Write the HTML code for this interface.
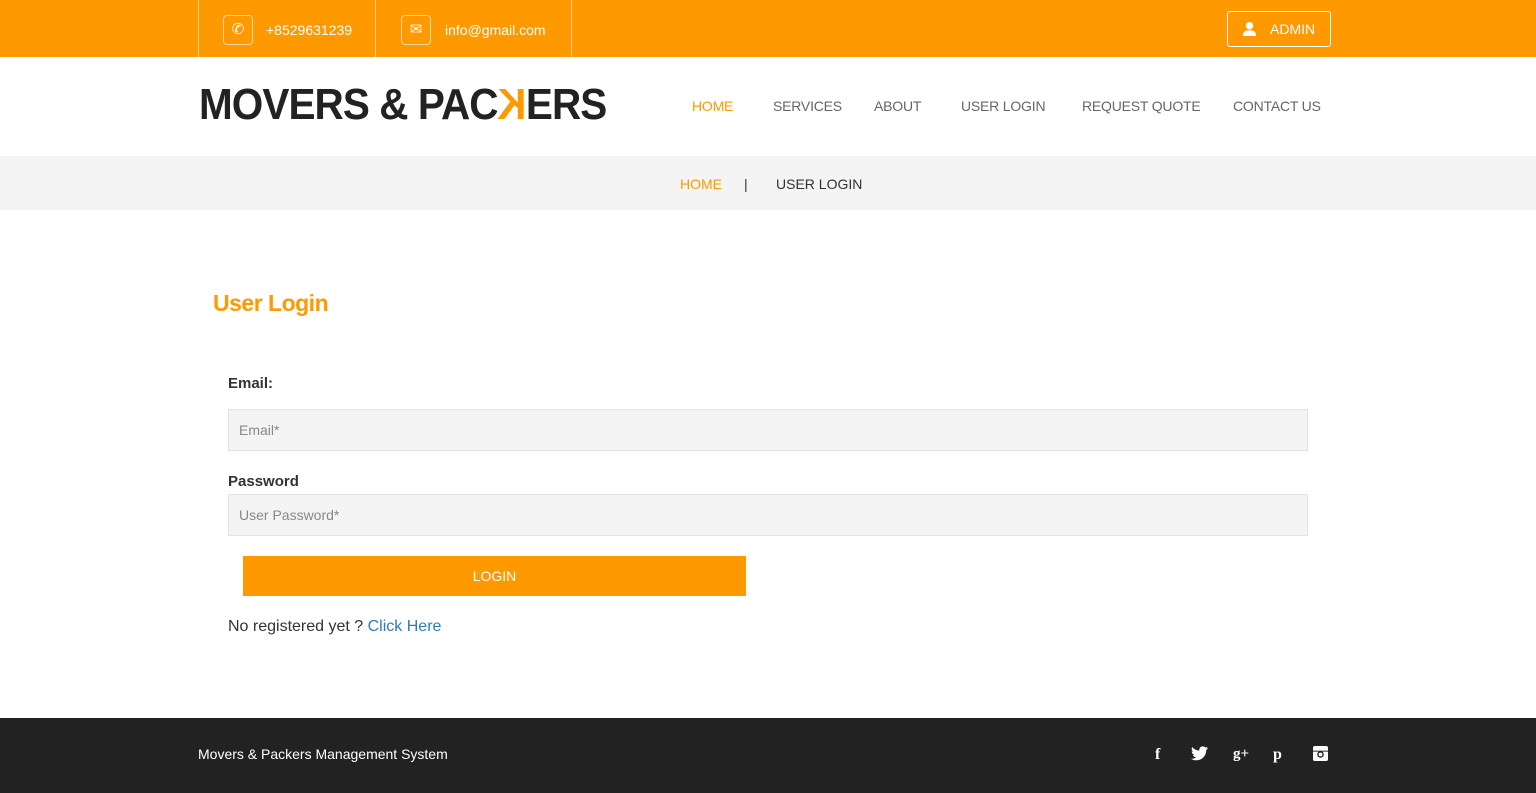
<!DOCTYPE html>
<html><head><meta charset="utf-8"><style>
*{margin:0;padding:0;box-sizing:border-box}
body{width:1536px;height:793px;font-family:"Liberation Sans",sans-serif;background:#fff;position:relative;overflow:hidden}
.top{position:absolute;left:0;top:0;width:1536px;height:57px;background:#ff9900}
.vl{position:absolute;top:0;width:1px;height:57px;background:#ffd089}
.ib{position:absolute;top:15px;width:30px;height:30px;border:1px solid #ffd9a0;border-radius:4px;color:#fff;text-align:center;line-height:28px;font-size:15px}
.tt{position:absolute;top:22px;color:#fff;font-size:14px}
.admin{position:absolute;left:1227px;top:11px;width:104px;height:36px;border:1px solid #fff;border-radius:3px;color:#fff;font-size:14px;line-height:34px;padding-left:42px}
.logo{position:absolute;left:199px;top:80px;font-size:44px;font-weight:bold;color:#222;letter-spacing:-1px;transform:scaleX(0.92);transform-origin:left}
.logo span{color:#ff9900;display:inline-block;transform:scaleX(-1)}
.nav{position:absolute;top:98px;font-size:14px;color:#666;letter-spacing:-0.2px}
.bc{position:absolute;left:0;top:156px;width:1536px;height:54px;background:#f4f4f4;font-size:14px}
h2{position:absolute;left:213px;top:290px;color:#ff9900;font-size:23px;font-weight:bold;letter-spacing:-0.5px}
.lbl{position:absolute;left:228px;font-size:15px;font-weight:bold;color:#333}
.inp{position:absolute;left:228px;width:1080px;height:42px;background:#f4f4f4;border:1px solid #e4e4e4;padding-left:10px;line-height:40px;font-size:14px;color:#888}
.btn{position:absolute;left:243px;top:556px;width:503px;height:40px;background:#ff9900;color:#fff;font-size:14px;text-align:center;line-height:40px}
.foot{position:absolute;left:0;top:718px;width:1536px;height:75px;background:#222}
.s{position:absolute;top:28px;color:#fff;font-size:16px;font-weight:bold}
</style></head><body>
<div class="top">
<div class="vl" style="left:198px"></div><div class="vl" style="left:375px"></div><div class="vl" style="left:571px"></div>
<div class="ib" style="left:223px">✆</div><div class="tt" style="left:266px">+8529631239</div>
<div class="ib" style="left:401px">✉</div><div class="tt" style="left:445px">info@gmail.com</div>
<div class="admin"><svg style="position:absolute;left:14px;top:9px" width="15" height="15" viewBox="0 0 16 16"><circle cx="8" cy="5" r="4" fill="#fff"/><path d="M1 16c0-5 3-6 7-6s7 1 7 6z" fill="#fff"/></svg>ADMIN</div>
</div>
<div class="logo">MOVERS &amp; PAC<span>K</span>ERS</div>
<div class="nav" style="left:692px;color:#ff9900">HOME</div>
<div class="nav" style="left:773px">SERVICES</div>
<div class="nav" style="left:874px">ABOUT</div>
<div class="nav" style="left:961px">USER LOGIN</div>
<div class="nav" style="left:1082px">REQUEST QUOTE</div>
<div class="nav" style="left:1233px">CONTACT US</div>
<div class="bc"><span style="position:absolute;left:680px;top:20px;color:#ff9900">HOME</span><span style="position:absolute;left:744px;top:20px;color:#333">|</span><span style="position:absolute;left:776px;top:20px;color:#333">USER LOGIN</span></div>
<h2>User Login</h2>
<div class="lbl" style="top:375px">Email:</div>
<div class="inp" style="top:409px">Email*</div>
<div class="lbl" style="top:473px">Password</div>
<div class="inp" style="top:494px">User Password*</div>
<div class="btn">LOGIN</div>
<div style="position:absolute;left:228px;top:618px;font-size:16px;color:#333">No registered yet ? <span style="color:#337ab7">Click Here</span></div>
<div class="foot">
<div style="position:absolute;left:198px;top:28px;color:#fff;font-size:14px">Movers &amp; Packers Management System</div>
<div class="s" style="left:1155px;font-family:'Liberation Serif',serif">f</div>
<div class="s" style="left:1191px"><svg width="17" height="15" viewBox="0 0 24 20"><path d="M24 2.3c-.9.4-1.8.7-2.8.8 1-.6 1.800-1.6 2.2-2.7-1 .6-2 1-3.1 1.2C19.3.6 18 0 16.6 0c-2.7 0-4.9 2.2-4.9 4.9 0 .4 0 .8.1 1.1C7.7 5.8 4.1 3.9 1.7.9c-.4.7-.7 1.6-.7 2.5 0 1.7.9 3.2 2.2 4.1-.8 0-1.600-.2-2.2-.6v.1c0 2.4 1.7 4.4 3.9 4.8-.7.2-1.5.2-2.2.1.6 2 2.4 3.4 4.6 3.4-1.7 1.3-3.8 2.1-6.1 2.1H0c2.2 1.4 4.8 2.2 7.5 2.2 9.1 0 14-7.5 14-14v-.6c1-.7 1.8-1.6 2.5-2.5z" fill="#fff"/></svg></div>
<div class="s" style="left:1233px;font-size:15px;font-family:'Liberation Serif',serif">g+</div>
<div class="s" style="left:1273px;font-family:'Liberation Serif',serif">p</div>
<div class="s" style="left:1313px"><svg width="15" height="15" viewBox="0 0 16 16"><rect x="0" y="0" width="16" height="16" rx="2" fill="#fff"/><circle cx="8" cy="9" r="3.5" fill="#222"/><circle cx="8" cy="9" r="2" fill="#fff"/><rect x="0" y="5" width="16" height="1" fill="#222"/></svg></div>
</div>
</body></html>
